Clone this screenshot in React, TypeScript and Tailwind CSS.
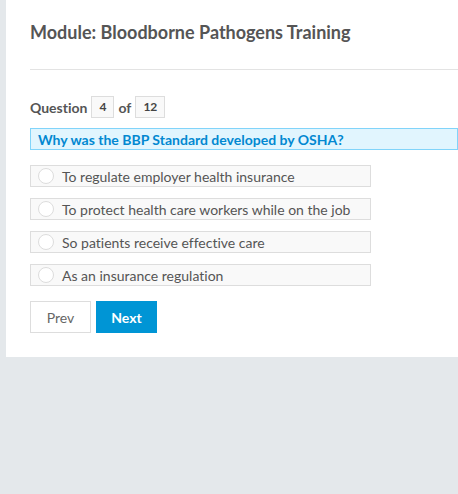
import { useState } from "react";

const options = [
  "To regulate employer health insurance",
  "To protect health care workers while on the job",
  "So patients receive effective care",
  "As an insurance regulation",
];

export default function App() {
  const [selected, setSelected] = useState<number | null>(null);

  return (
    <div
      className="min-h-[494px] w-[458px] overflow-hidden bg-[#e4e8eb] pl-[6px] [font-variant-ligatures:none]"
      style={{ fontFamily: "Lato, 'Open Sans', sans-serif" }}
    >
      <div className="h-[357px] bg-white pl-[24px]">
        <h1 className="pt-[20px] text-[18px] font-bold leading-[24px] text-[#555]">
          Module: Bloodborne Pathogens Training
        </h1>
        <hr className="mt-[25px] border-t border-[#e3e3e3]" />

        <div className="mt-[26px] flex items-center text-[14px] font-bold text-[#555]">
          <span>Question</span>
          <span className="ml-[4px] flex h-[22px] w-[23px] items-center justify-center border border-[#ddd] bg-[#f9f9f9] text-[12px] font-bold text-[#444]">
            4
          </span>
          <span className="ml-[4px]">of</span>
          <span className="ml-[4px] flex h-[22px] w-[30px] items-center justify-center border border-[#ddd] bg-[#f9f9f9] text-[12px] font-bold text-[#444]">
            12
          </span>
        </div>

        <div className="mt-[10px] flex h-[22px] items-center border border-[#81d4fa] bg-[#e1f5fe] pl-[7px] text-[14px] font-bold text-[#0288d1]">
          Why was the BBP Standard developed by OSHA?
        </div>

        <div className="mt-[15px] flex flex-col gap-[11px]">
          {options.map((opt, i) => (
            <label
              key={opt}
              onClick={() => setSelected(i)}
              className="flex h-[22px] w-[341px] cursor-pointer items-center border border-[#ddd] bg-[#f9f9f9] pl-[7px] text-[14px] text-[#555]"
            >
              <span
                className={`h-[16px] w-[16px] rounded-full border ${
                  selected === i ? "border-[#0095d5] bg-[#0095d5]" : "border-[#ddd] bg-white"
                }`}
              />
              <span className="ml-[8px]">{opt}</span>
            </label>
          ))}
        </div>

        <div className="mt-[15px] flex gap-[5px]">
          <button className="h-[32px] w-[61px] border border-[#ddd] bg-white text-[14px] text-[#666]">
            Prev
          </button>
          <button className="h-[32px] w-[61px] bg-[#0095d5] text-[14px] font-bold text-white">
            Next
          </button>
        </div>
      </div>
    </div>
  );
}
